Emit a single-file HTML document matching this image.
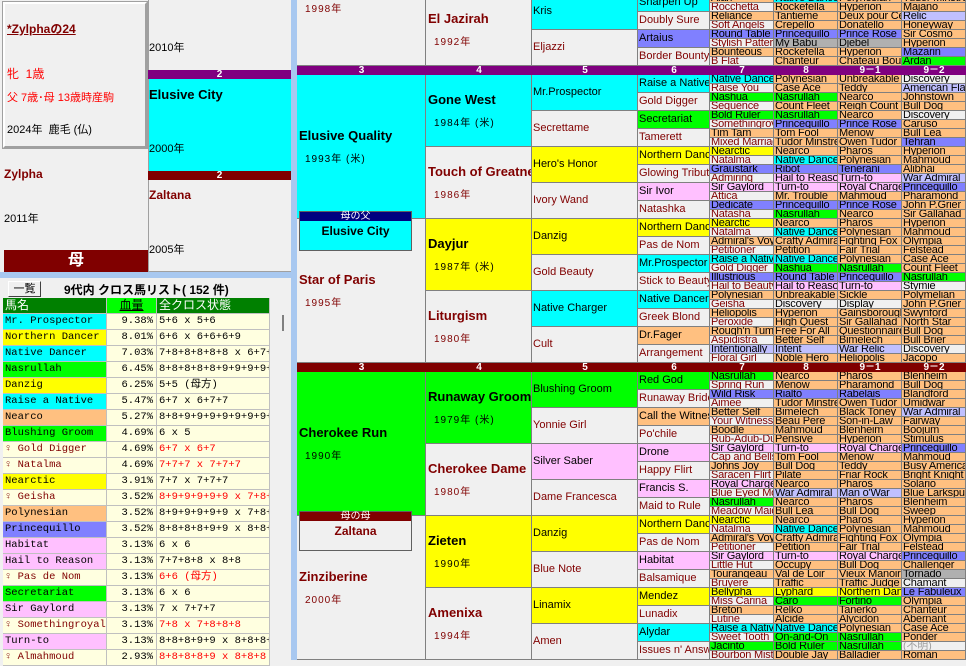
<!DOCTYPE html>
<html><head><meta charset="utf-8">
<style>
*{margin:0;padding:0;box-sizing:border-box}
body{width:966px;height:660px;overflow:hidden;background:#f0f0f0;position:relative;font-family:"Liberation Sans","Noto Sans CJK JP",sans-serif}
.a{position:absolute}
.col{position:absolute;top:0;display:flex;flex-direction:column}
.col i,.r i{font-style:normal;display:block;overflow:hidden;white-space:nowrap;border-right:1px solid #808080;border-bottom:1px solid #808080;background:#f0f0f0;color:#000}
.r{display:flex;height:9px}
.r i{width:64px;height:9px;font-size:11px;line-height:9px;padding-left:1px;letter-spacing:-0.2px}
.h18{height:18px;font-size:11px;line-height:17px;padding-left:1px}
.h36{height:36px;font-size:11px;line-height:35px;padding-left:1px}
.big{display:flex!important;flex-direction:column;justify-content:center}
.big b{font-size:13px;padding-left:2px;line-height:16px}
.big span{font-size:10px;padding-left:8px;margin-top:6px;letter-spacing:1px}
.o{background:#ffc080!important}
.c{background:#00ffff!important}
.y{background:#ffff00!important}
.g{background:#00ff00!important}
.p{background:#ffc0ff!important}
.b{background:#8080ff!important}
.l{background:#c0c0ff!important}
.gr{background:#b0b0b0!important}
.f{color:#800000!important}
.bar{position:absolute;left:297px;width:669px;height:9px;color:#fff;font-size:10px;font-weight:bold;line-height:9px}
.bar span{position:absolute;text-align:center;top:0}
.lt{position:absolute;left:0;font-family:"Liberation Mono","Noto Sans CJK JP",monospace;font-size:10.5px;display:flex;height:16px;line-height:15px}
.lt i{font-style:normal;display:block;border-right:1px solid #c0c0c0;border-bottom:1px solid #c0c0c0;overflow:hidden;white-space:nowrap;background:#ffffe0}
.lt i:nth-child(1){width:104px;padding-left:2px;margin-left:3px}
.lt i:nth-child(2){width:50px;text-align:right;padding-right:3px}
.lt i:nth-child(3){width:113px;padding-left:2px}
.rd{color:#ff0000}
.fn{color:#800000}
</style></head><body>

<!-- LEFT PANEL -->
<div class="a" style="left:3px;top:2px;width:144px;height:146px;border:2px solid #fff;border-right-color:#a0a0a0;border-bottom-color:#a0a0a0;outline:1px solid #a0a0a0"></div>
<div class="a" style="left:7px;top:20px;font-size:12px;font-weight:bold;color:#800000;text-decoration:underline">*Zylphaの24</div>
<div class="a" style="left:7px;top:65px;font-size:12px;color:#ff0000">牝&nbsp; 1歳</div>
<div class="a" style="left:7px;top:89px;font-size:11px;color:#ff0000">父 7歳･母 13歳時産駒</div>
<div class="a" style="left:7px;top:121px;font-size:11px;color:#000">2024年&nbsp; 鹿毛 (仏)</div>
<div class="a" style="left:4px;top:167px;font-size:12px;font-weight:bold;color:#800000">Zylpha</div>
<div class="a" style="left:4px;top:210px;font-size:11px">2011年</div>
<div class="a" style="left:4px;top:250px;width:144px;height:22px;background:#800000;color:#fff;font-weight:bold;font-size:16px;text-align:center;line-height:22px">母</div>
<div class="a" style="left:148px;top:0;width:1px;height:272px;background:#a0a0a0"></div>
<div class="a" style="left:149px;top:39px;font-size:11px">2010年</div>
<div class="a" style="left:148px;top:70px;width:143px;height:9px;background:#800080;color:#fff;font-size:10px;font-weight:bold;text-align:center;line-height:9px">2</div>
<div class="a" style="left:149px;top:79px;width:142px;height:92px;background:#00ffff"></div>
<div class="a" style="left:149px;top:87px;font-size:13px;font-weight:bold">Elusive City</div>
<div class="a" style="left:149px;top:140px;font-size:11px">2000年</div>
<div class="a" style="left:148px;top:171px;width:143px;height:9px;background:#800000;color:#fff;font-size:10px;font-weight:bold;text-align:center;line-height:9px">2</div>
<div class="a" style="left:149px;top:188px;font-size:12px;font-weight:bold;color:#800000">Zaltana</div>
<div class="a" style="left:149px;top:241px;font-size:11px">2005年</div>
<div class="a" style="left:148px;top:271px;width:143px;height:1px;background:#a0a0a0"></div>
<div class="a" style="left:0;top:272px;width:291px;height:6px;background:#a8c8f0"></div>
<div class="a" style="left:291px;top:0;width:6px;height:660px;background:#a8c8f0"></div>

<div class="a" style="left:8px;top:281px;width:33px;height:16px;background:#f0f0f0;border:1px solid #fff;border-right-color:#404040;border-bottom-color:#404040;font-size:11px;text-align:center;line-height:14px">一覧</div>
<div class="a" style="left:64px;top:281px;font-size:12px;font-weight:bold">9代内 クロス馬リスト( 152 件)</div>
<div class="a" style="left:272px;top:298px;width:19px;height:362px;background:#f0f0f0"></div>
<div class="a" style="left:282px;top:315px;width:2px;height:16px;background:#808080"></div>

<div class="lt" style="top:298px;font-family:'Liberation Sans','Noto Sans CJK JP',sans-serif;font-size:12px"><i style="background:#008000;color:#fff">馬名</i><i style="background:#00ff00;text-align:center;text-decoration:underline;padding:0">血量</i><i style="background:#008000;color:#fff">全クロス状態</i></div>
<div class="lt" style="top:314px"><i class="c">Mr. Prospector</i><i>9.38%</i><i>5+6 x 5+6</i></div>
<div class="lt" style="top:330px"><i class="y">Northern Dancer</i><i>8.01%</i><i>6+6 x 6+6+6+9</i></div>
<div class="lt" style="top:346px"><i class="c">Native Dancer</i><i>7.03%</i><i>7+8+8+8+8+8 x 6+7+8</i></div>
<div class="lt" style="top:362px"><i class="g">Nasrullah</i><i>6.45%</i><i>8+8+8+8+8+9+9+9+9+9</i></div>
<div class="lt" style="top:378px"><i class="y">Danzig</i><i>6.25%</i><i>5+5 (母方)</i></div>
<div class="lt" style="top:394px"><i class="c">Raise a Native</i><i>5.47%</i><i>6+7 x 6+7+7</i></div>
<div class="lt" style="top:410px"><i class="o">Nearco</i><i>5.27%</i><i>8+8+9+9+9+9+9+9+9+9</i></div>
<div class="lt" style="top:426px"><i class="g">Blushing Groom</i><i>4.69%</i><i>6 x 5</i></div>
<div class="lt" style="top:442px"><i class="fn">♀ Gold Digger</i><i>4.69%</i><i class="rd">6+7 x 6+7</i></div>
<div class="lt" style="top:458px"><i class="fn">♀ Natalma</i><i>4.69%</i><i class="rd">7+7+7 x 7+7+7</i></div>
<div class="lt" style="top:474px"><i class="y">Nearctic</i><i>3.91%</i><i>7+7 x 7+7+7</i></div>
<div class="lt" style="top:490px"><i class="fn">♀ Geisha</i><i>3.52%</i><i class="rd">8+9+9+9+9+9 x 7+8+9</i></div>
<div class="lt" style="top:506px"><i class="o">Polynesian</i><i>3.52%</i><i>8+9+9+9+9+9 x 7+8+9</i></div>
<div class="lt" style="top:522px"><i class="b">Princequillo</i><i>3.52%</i><i>8+8+8+8+9+9 x 8+8+9</i></div>
<div class="lt" style="top:538px"><i class="p">Habitat</i><i>3.13%</i><i>6 x 6</i></div>
<div class="lt" style="top:554px"><i class="p">Hail to Reason</i><i>3.13%</i><i>7+7+8+8 x 8+8</i></div>
<div class="lt" style="top:570px"><i class="fn">♀ Pas de Nom</i><i>3.13%</i><i class="rd">6+6 (母方)</i></div>
<div class="lt" style="top:586px"><i class="g">Secretariat</i><i>3.13%</i><i>6 x 6</i></div>
<div class="lt" style="top:602px"><i class="p">Sir Gaylord</i><i>3.13%</i><i>7 x 7+7+7</i></div>
<div class="lt" style="top:618px"><i class="fn">♀ Somethingroyal</i><i>3.13%</i><i class="rd">7+8 x 7+8+8+8</i></div>
<div class="lt" style="top:634px"><i class="p">Turn-to</i><i>3.13%</i><i>8+8+8+9+9 x 8+8+8+9</i></div>
<div class="lt" style="top:650px"><i class="fn">♀ Almahmoud</i><i>2.93%</i><i class="rd">8+8+8+8+9 x 8+8+8</i></div>

<!-- TOP PARTIAL SECTION -->
<div class="a" style="left:297px;top:-6px;width:669px;height:72px">
 <div class="col" style="left:0;width:129px"><i class="big" style="height:72px;justify-content:flex-start;padding-top:6px"><span class="f" style="margin:0">1998年</span></i></div>
 <div class="col" style="left:129px;width:106px"><i class="big" style="height:72px"><b class="f">El Jazirah</b><span class="f">1992年</span></i></div>
 <div class="col" style="left:235px;width:106px"><i class="h36 c">Kris</i><i class="h36 f">Eljazzi</i></div>
 <div class="col" style="left:341px;width:72px"><i class="h18 c">Sharpen Up</i><i class="h18 f">Doubly Sure</i><i class="h18 b">Artaius</i><i class="h18 f">Border Bounty</i></div>
 <div class="col" style="left:413px">
  <div class="r"><i class="o">Alan</i><i class="c">Native Dancer</i><i class="o">Polynesian</i><i class="o">Tudor Minstrel</i></div>
  <div class="r"><i class="f">Rocchetta</i><i class="o">Rockefella</i><i class="o">Hyperion</i><i class="o">Majano</i></div>
  <div class="r"><i class="o">Reliance</i><i class="o">Tantieme</i><i class="o">Deux pour Cent</i><i class="l">Relic</i></div>
  <div class="r"><i class="f">Soft Angels</i><i class="o">Crepello</i><i class="o">Donatello</i><i class="o">Honeyway</i></div>
  <div class="r"><i class="b">Round Table</i><i class="b">Princequillo</i><i class="b">Prince Rose</i><i class="o">Sir Cosmo</i></div>
  <div class="r"><i class="f">Stylish Pattern</i><i class="gr">My Babu</i><i class="gr">Djebel</i><i class="o">Hyperion</i></div>
  <div class="r"><i class="o">Bounteous</i><i class="o">Rockefella</i><i class="o">Hyperion</i><i class="b">Mazarin</i></div>
  <div class="r"><i class="f">B Flat</i><i class="o">Chanteur</i><i class="o">Chateau Bouscaut</i><i class="g">Ardan</i></div>
 </div>
</div>

<div class="bar" style="top:66px;background:#800080"><span style="left:0;width:129px">3</span><span style="left:129px;width:106px">4</span><span style="left:235px;width:106px">5</span><span style="left:341px;width:72px">6</span><span style="left:413px;width:64px">7</span><span style="left:477px;width:64px">8</span><span style="left:541px;width:64px">9－1</span><span style="left:605px;width:64px">9－2</span></div>

<!-- SECTION 1 -->
<div class="a" style="left:297px;top:75px;width:669px;height:288px">
 <div class="col" style="left:0;width:129px"><i class="big c" style="height:144px"><b>Elusive Quality</b><span>1993年 (米)</span></i><i class="big" style="height:144px"><b class="f">Star of Paris</b><span class="f">1995年</span></i></div>
 <div class="col" style="left:129px;width:106px"><i class="big c" style="height:72px"><b>Gone West</b><span>1984年 (米)</span></i><i class="big" style="height:72px"><b class="f">Touch of Greatness</b><span class="f">1986年</span></i><i class="big y" style="height:72px"><b>Dayjur</b><span>1987年 (米)</span></i><i class="big" style="height:72px"><b class="f">Liturgism</b><span class="f">1980年</span></i></div>
 <div class="col" style="left:235px;width:106px"><i class="h36 c">Mr.Prospector</i><i class="h36 f">Secrettame</i><i class="h36 y">Hero's Honor</i><i class="h36 f">Ivory Wand</i><i class="h36 y">Danzig</i><i class="h36 f">Gold Beauty</i><i class="h36 c">Native Charger</i><i class="h36 f">Cult</i></div>
 <div class="col" style="left:341px;width:72px"><i class="h18 c">Raise a Native</i><i class="h18 f">Gold Digger</i><i class="h18 g">Secretariat</i><i class="h18 f">Tamerett</i><i class="h18 y">Northern Dancer</i><i class="h18 f">Glowing Tribute</i><i class="h18 p">Sir Ivor</i><i class="h18 f">Natashka</i><i class="h18 y">Northern Dancer</i><i class="h18 f">Pas de Nom</i><i class="h18 c">Mr.Prospector</i><i class="h18 f">Stick to Beauty</i><i class="h18 c">Native Dancer</i><i class="h18 f">Greek Blond</i><i class="h18 o">Dr.Fager</i><i class="h18 f">Arrangement</i></div>
 <div class="col" style="left:413px">
  <div class="r"><i class="c">Native Dancer</i><i class="o">Polynesian</i><i class="o">Unbreakable</i><i>Discovery</i></div>
  <div class="r"><i class="f">Raise You</i><i class="o">Case Ace</i><i class="o">Teddy</i><i class="l">American Flag</i></div>
  <div class="r"><i class="g">Nashua</i><i class="g">Nasrullah</i><i class="o">Nearco</i><i class="o">Johnstown</i></div>
  <div class="r"><i class="f">Sequence</i><i class="o">Count Fleet</i><i class="o">Reigh Count</i><i class="o">Bull Dog</i></div>
  <div class="r"><i class="g">Bold Ruler</i><i class="g">Nasrullah</i><i class="o">Nearco</i><i>Discovery</i></div>
  <div class="r"><i class="f">Somethingroyal</i><i class="b">Princequillo</i><i class="b">Prince Rose</i><i class="o">Caruso</i></div>
  <div class="r"><i class="o">Tim Tam</i><i class="o">Tom Fool</i><i class="o">Menow</i><i class="o">Bull Lea</i></div>
  <div class="r"><i class="f">Mixed Marriage</i><i class="o">Tudor Minstrel</i><i class="o">Owen Tudor</i><i class="b">Tehran</i></div>
  <div class="r"><i class="y">Nearctic</i><i class="o">Nearco</i><i class="o">Pharos</i><i class="o">Hyperion</i></div>
  <div class="r"><i class="f">Natalma</i><i class="c">Native Dancer</i><i class="o">Polynesian</i><i class="o">Mahmoud</i></div>
  <div class="r"><i class="b">Graustark</i><i class="b">Ribot</i><i class="b">Tenerani</i><i class="o">Alibhai</i></div>
  <div class="r"><i class="f">Admiring</i><i class="p">Hail to Reason</i><i class="p">Turn-to</i><i class="l">War Admiral</i></div>
  <div class="r"><i class="p">Sir Gaylord</i><i class="p">Turn-to</i><i class="p">Royal Charger</i><i class="b">Princequillo</i></div>
  <div class="r"><i class="f">Attica</i><i class="o">Mr. Trouble</i><i class="o">Mahmoud</i><i class="o">Pharamond</i></div>
  <div class="r"><i class="b">Dedicate</i><i class="b">Princequillo</i><i class="b">Prince Rose</i><i class="o">John P.Grier</i></div>
  <div class="r"><i class="f">Natasha</i><i class="g">Nasrullah</i><i class="o">Nearco</i><i class="o">Sir Gallahad</i></div>
  <div class="r"><i class="y">Nearctic</i><i class="o">Nearco</i><i class="o">Pharos</i><i class="o">Hyperion</i></div>
  <div class="r"><i class="f">Natalma</i><i class="c">Native Dancer</i><i class="o">Polynesian</i><i class="o">Mahmoud</i></div>
  <div class="r"><i class="o">Admiral's Voyage</i><i class="o">Crafty Admiral</i><i class="o">Fighting Fox</i><i class="o">Olympia</i></div>
  <div class="r"><i class="f">Petitioner</i><i class="o">Petition</i><i class="o">Fair Trial</i><i class="o">Felstead</i></div>
  <div class="r"><i class="c">Raise a Native</i><i class="c">Native Dancer</i><i class="o">Polynesian</i><i class="o">Case Ace</i></div>
  <div class="r"><i class="f">Gold Digger</i><i class="g">Nashua</i><i class="g">Nasrullah</i><i class="o">Count Fleet</i></div>
  <div class="r"><i class="b">Illustrious</i><i class="b">Round Table</i><i class="b">Princequillo</i><i class="g">Nasrullah</i></div>
  <div class="r"><i class="f">Hail to Beauty</i><i class="p">Hail to Reason</i><i class="p">Turn-to</i><i>Stymie</i></div>
  <div class="r"><i class="o">Polynesian</i><i class="o">Unbreakable</i><i class="o">Sickle</i><i class="o">Polymelian</i></div>
  <div class="r"><i class="f">Geisha</i><i>Discovery</i><i>Display</i><i class="o">John P.Grier</i></div>
  <div class="r"><i class="o">Heliopolis</i><i class="o">Hyperion</i><i class="o">Gainsborough</i><i class="o">Swynford</i></div>
  <div class="r"><i class="f">Peroxide</i><i class="o">High Quest</i><i class="o">Sir Gallahad</i><i class="o">North Star</i></div>
  <div class="r"><i class="o">Rough'n Tumble</i><i class="o">Free For All</i><i class="o">Questionnaire</i><i class="o">Bull Dog</i></div>
  <div class="r"><i class="f">Aspidistra</i><i class="o">Better Self</i><i class="o">Bimelech</i><i class="o">Bull Brier</i></div>
  <div class="r"><i class="l">Intentionally</i><i class="l">Intent</i><i class="l">War Relic</i><i>Discovery</i></div>
  <div class="r"><i class="f">Floral Girl</i><i class="o">Noble Hero</i><i class="o">Heliopolis</i><i class="o">Jacopo</i></div>
 </div>
</div>

<div class="bar" style="top:363px;background:#800000"><span style="left:0;width:129px">3</span><span style="left:129px;width:106px">4</span><span style="left:235px;width:106px">5</span><span style="left:341px;width:72px">6</span><span style="left:413px;width:64px">7</span><span style="left:477px;width:64px">8</span><span style="left:541px;width:64px">9－1</span><span style="left:605px;width:64px">9－2</span></div>

<!-- SECTION 2 -->
<div class="a" style="left:297px;top:372px;width:669px;height:288px">
 <div class="col" style="left:0;width:129px"><i class="big g" style="height:144px"><b>Cherokee Run</b><span>1990年</span></i><i class="big" style="height:144px"><b class="f">Zinziberine</b><span class="f">2000年</span></i></div>
 <div class="col" style="left:129px;width:106px"><i class="big g" style="height:72px"><b>Runaway Groom</b><span>1979年 (米)</span></i><i class="big" style="height:72px"><b class="f">Cherokee Dame</b><span class="f">1980年</span></i><i class="big y" style="height:72px"><b>Zieten</b><span>1990年</span></i><i class="big" style="height:72px"><b class="f">Amenixa</b><span class="f">1994年</span></i></div>
 <div class="col" style="left:235px;width:106px"><i class="h36 g">Blushing Groom</i><i class="h36 f">Yonnie Girl</i><i class="h36 p">Silver Saber</i><i class="h36 f">Dame Francesca</i><i class="h36 y">Danzig</i><i class="h36 f">Blue Note</i><i class="h36 y">Linamix</i><i class="h36 f">Amen</i></div>
 <div class="col" style="left:341px;width:72px"><i class="h18 g">Red God</i><i class="h18 f">Runaway Bride</i><i class="h18 o">Call the Witness</i><i class="h18 f">Po'chile</i><i class="h18 p">Drone</i><i class="h18 f">Happy Flirt</i><i class="h18 p">Francis S.</i><i class="h18 f">Maid to Rule</i><i class="h18 y">Northern Dancer</i><i class="h18 f">Pas de Nom</i><i class="h18 p">Habitat</i><i class="h18 f">Balsamique</i><i class="h18 y">Mendez</i><i class="h18 f">Lunadix</i><i class="h18 c">Alydar</i><i class="h18 f">Issues n' Answers</i></div>
 <div class="col" style="left:413px">
  <div class="r"><i class="g">Nasrullah</i><i class="o">Nearco</i><i class="o">Pharos</i><i class="o">Blenheim</i></div>
  <div class="r"><i class="f">Spring Run</i><i class="o">Menow</i><i class="o">Pharamond</i><i class="o">Bull Dog</i></div>
  <div class="r"><i class="b">Wild Risk</i><i class="b">Rialto</i><i class="b">Rabelais</i><i class="o">Blandford</i></div>
  <div class="r"><i class="f">Aimee</i><i class="o">Tudor Minstrel</i><i class="o">Owen Tudor</i><i class="o">Umidwar</i></div>
  <div class="r"><i class="o">Better Self</i><i class="o">Bimelech</i><i class="o">Black Toney</i><i class="l">War Admiral</i></div>
  <div class="r"><i class="f">Your Witness</i><i class="o">Beau Pere</i><i class="o">Son-in-Law</i><i class="o">Fairway</i></div>
  <div class="r"><i class="o">Boodle</i><i class="o">Mahmoud</i><i class="o">Blenheim</i><i class="o">Boojum</i></div>
  <div class="r"><i class="f">Rub-Adub-Dub</i><i class="o">Pensive</i><i class="o">Hyperion</i><i class="o">Stimulus</i></div>
  <div class="r"><i class="p">Sir Gaylord</i><i class="p">Turn-to</i><i class="p">Royal Charger</i><i class="b">Princequillo</i></div>
  <div class="r"><i class="f">Cap and Bells</i><i class="o">Tom Fool</i><i class="o">Menow</i><i class="o">Mahmoud</i></div>
  <div class="r"><i class="o">Johns Joy</i><i class="o">Bull Dog</i><i class="o">Teddy</i><i class="o">Busy American</i></div>
  <div class="r"><i class="f">Saracen Flirt</i><i class="o">Pilate</i><i class="o">Friar Rock</i><i class="o">Bright Knight</i></div>
  <div class="r"><i class="p">Royal Charger</i><i class="o">Nearco</i><i class="o">Pharos</i><i class="o">Solario</i></div>
  <div class="r"><i class="f">Blue Eyed Momo</i><i class="l">War Admiral</i><i class="l">Man o'War</i><i class="o">Blue Larkspur</i></div>
  <div class="r"><i class="g">Nasrullah</i><i class="o">Nearco</i><i class="o">Pharos</i><i class="o">Blenheim</i></div>
  <div class="r"><i class="f">Meadow Maid</i><i class="o">Bull Lea</i><i class="o">Bull Dog</i><i class="o">Sweep</i></div>
  <div class="r"><i class="y">Nearctic</i><i class="o">Nearco</i><i class="o">Pharos</i><i class="o">Hyperion</i></div>
  <div class="r"><i class="f">Natalma</i><i class="c">Native Dancer</i><i class="o">Polynesian</i><i class="o">Mahmoud</i></div>
  <div class="r"><i class="o">Admiral's Voyage</i><i class="o">Crafty Admiral</i><i class="o">Fighting Fox</i><i class="o">Olympia</i></div>
  <div class="r"><i class="f">Petitioner</i><i class="o">Petition</i><i class="o">Fair Trial</i><i class="o">Felstead</i></div>
  <div class="r"><i class="p">Sir Gaylord</i><i class="p">Turn-to</i><i class="p">Royal Charger</i><i class="b">Princequillo</i></div>
  <div class="r"><i class="f">Little Hut</i><i class="o">Occupy</i><i class="o">Bull Dog</i><i class="o">Challenger</i></div>
  <div class="r"><i class="o">Tourangeau</i><i class="o">Val de Loir</i><i class="o">Vieux Manoir</i><i class="gr">Tornado</i></div>
  <div class="r"><i class="f">Bruyere</i><i class="o">Traffic</i><i class="o">Traffic Judge</i><i>Chamant</i></div>
  <div class="r"><i class="y">Bellypha</i><i class="y">Lyphard</i><i class="y">Northern Dancer</i><i class="b">Le Fabuleux</i></div>
  <div class="r"><i class="f">Miss Carina</i><i class="g">Caro</i><i class="g">Fortino</i><i class="o">Olympia</i></div>
  <div class="r"><i class="o">Breton</i><i class="o">Relko</i><i class="o">Tanerko</i><i class="o">Chanteur</i></div>
  <div class="r"><i class="f">Lutine</i><i class="o">Alcide</i><i class="o">Alycidon</i><i class="o">Abernant</i></div>
  <div class="r"><i class="c">Raise a Native</i><i class="c">Native Dancer</i><i class="o">Polynesian</i><i class="o">Case Ace</i></div>
  <div class="r"><i class="f">Sweet Tooth</i><i class="g">On-and-On</i><i class="g">Nasrullah</i><i class="o">Ponder</i></div>
  <div class="r"><i class="g">Jacinto</i><i class="g">Bold Ruler</i><i class="g">Nasrullah</i><i style="color:#a0a0a0">(不明)</i></div>
  <div class="r"><i class="f">Bourbon Mist</i><i class="o">Double Jay</i><i class="o">Balladier</i><i class="o">Roman</i></div>
 </div>
</div>

<!-- label boxes -->
<div class="a" style="left:299px;top:211px;width:113px;height:40px;border:1px solid #606060;background:#00ffff">
 <div style="height:9px;background:#000080;color:#fff;font-size:10px;line-height:9px;text-align:center">母の父</div>
 <div style="font-size:12px;font-weight:bold;text-align:center;margin-top:3px">Elusive City</div>
</div>
<div class="a" style="left:299px;top:511px;width:113px;height:40px;border:1px solid #606060;background:#f0f0f0">
 <div style="height:9px;background:#800000;color:#fff;font-size:10px;line-height:9px;text-align:center">母の母</div>
 <div style="font-size:12px;font-weight:bold;text-align:center;margin-top:3px;color:#800000">Zaltana</div>
</div>
</body></html>
